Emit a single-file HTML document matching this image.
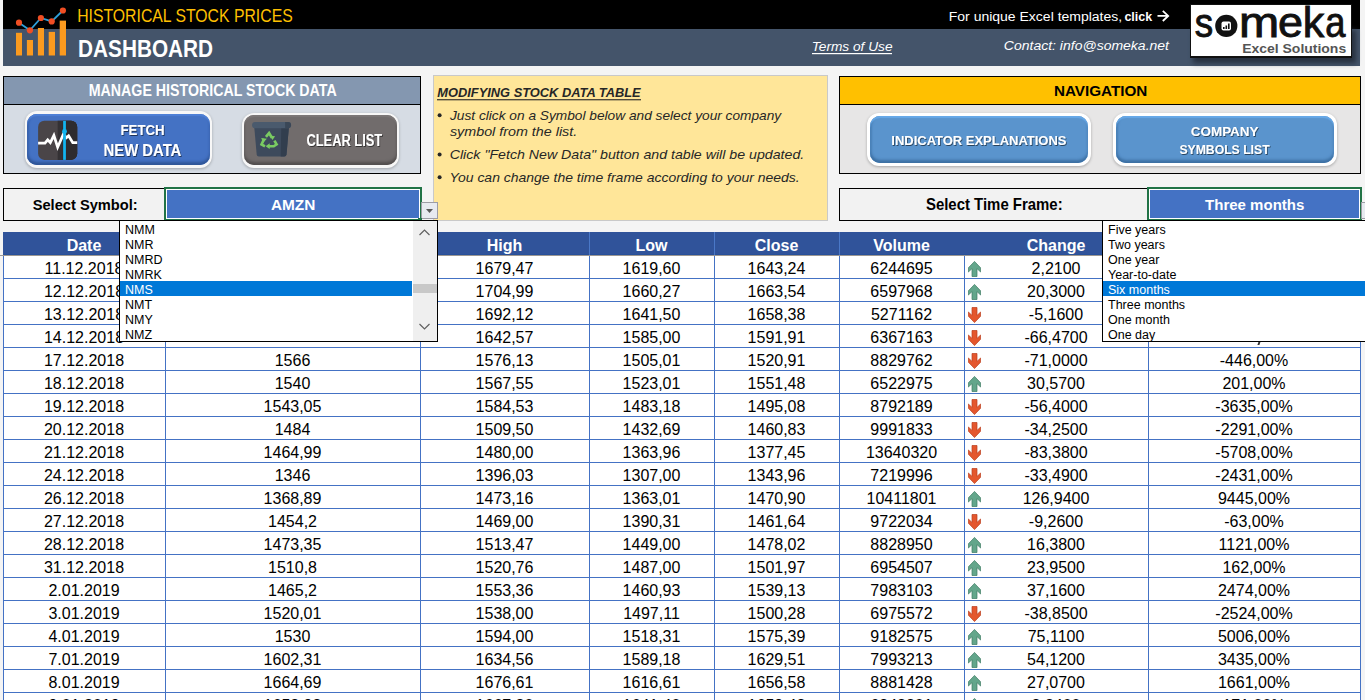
<!DOCTYPE html>
<html><head><meta charset="utf-8"><style>
*{margin:0;padding:0;box-sizing:border-box}
html,body{width:1365px;height:700px;overflow:hidden;background:#f4f4f4;font-family:"Liberation Sans",sans-serif}
#root{position:relative;width:1365px;height:700px;overflow:hidden}
#root div, #root svg{position:absolute}
.thdr{background:#30539a}
.th{color:#fff;font-weight:bold;font-size:16px;text-align:center;white-space:nowrap}
.hsep{width:1px;background:#4a78c8}
.tbody{background:#fff}
.hl{height:1px;background:#4472c4}
.vl{width:1px;background:#4472c4}
.td{height:23px;line-height:28px;font-size:16px;text-align:center;color:#000;white-space:nowrap}
.txt{white-space:nowrap}

</style></head><body>
<div id="root">
<div class="thdr" style="left:3px;top:232px;width:1358px;height:23px"></div>
<div class="th" style="left:3px;top:232px;width:162px;height:23px;line-height:28px">Date</div>
<div class="th" style="left:165px;top:232px;width:255px;height:23px;line-height:28px">Open</div>
<div class="th" style="left:420px;top:232px;width:169px;height:23px;line-height:28px">High</div>
<div class="th" style="left:589px;top:232px;width:125px;height:23px;line-height:28px">Low</div>
<div class="th" style="left:714px;top:232px;width:125px;height:23px;line-height:28px">Close</div>
<div class="th" style="left:839px;top:232px;width:125px;height:23px;line-height:28px">Volume</div>
<div class="th" style="left:964px;top:232px;width:184px;height:23px;line-height:28px">Change</div>
<div class="th" style="left:1148px;top:232px;width:212px;height:23px;line-height:28px">Change %</div>
<div class="hsep" style="left:165px;top:232px;height:23px"></div>
<div class="hsep" style="left:420px;top:232px;height:23px"></div>
<div class="hsep" style="left:589px;top:232px;height:23px"></div>
<div class="hsep" style="left:714px;top:232px;height:23px"></div>
<div class="hsep" style="left:839px;top:232px;height:23px"></div>
<div class="hsep" style="left:1148px;top:232px;height:23px"></div>
<div class="tbody" style="left:3px;top:255px;width:1357px;height:445px"></div>
<div style="left:0px;top:255px;width:1361px;height:1px;background:#9c9792"></div>
<div style="left:3px;top:254px;width:1358px;height:1px;background:#27509a"></div>
<div class="hsep" style="left:165px;top:254px;height:1px"></div>
<div class="hsep" style="left:420px;top:254px;height:1px"></div>
<div class="hsep" style="left:589px;top:254px;height:1px"></div>
<div class="hsep" style="left:714px;top:254px;height:1px"></div>
<div class="hsep" style="left:839px;top:254px;height:1px"></div>
<div class="hsep" style="left:1148px;top:254px;height:1px"></div>
<div class="hl" style="left:3px;top:278px;width:1358px"></div>
<div class="hl" style="left:3px;top:301px;width:1358px"></div>
<div class="hl" style="left:3px;top:324px;width:1358px"></div>
<div class="hl" style="left:3px;top:347px;width:1358px"></div>
<div class="hl" style="left:3px;top:370px;width:1358px"></div>
<div class="hl" style="left:3px;top:393px;width:1358px"></div>
<div class="hl" style="left:3px;top:416px;width:1358px"></div>
<div class="hl" style="left:3px;top:439px;width:1358px"></div>
<div class="hl" style="left:3px;top:462px;width:1358px"></div>
<div class="hl" style="left:3px;top:485px;width:1358px"></div>
<div class="hl" style="left:3px;top:508px;width:1358px"></div>
<div class="hl" style="left:3px;top:531px;width:1358px"></div>
<div class="hl" style="left:3px;top:554px;width:1358px"></div>
<div class="hl" style="left:3px;top:577px;width:1358px"></div>
<div class="hl" style="left:3px;top:600px;width:1358px"></div>
<div class="hl" style="left:3px;top:623px;width:1358px"></div>
<div class="hl" style="left:3px;top:646px;width:1358px"></div>
<div class="hl" style="left:3px;top:669px;width:1358px"></div>
<div class="hl" style="left:3px;top:692px;width:1358px"></div>
<div class="vl" style="left:3px;top:256px;height:445px"></div>
<div class="vl" style="left:165px;top:256px;height:445px"></div>
<div class="vl" style="left:420px;top:256px;height:445px"></div>
<div class="vl" style="left:589px;top:256px;height:445px"></div>
<div class="vl" style="left:714px;top:256px;height:445px"></div>
<div class="vl" style="left:839px;top:256px;height:445px"></div>
<div class="vl" style="left:964px;top:256px;height:445px"></div>
<div class="vl" style="left:1148px;top:256px;height:445px"></div>
<div class="vl" style="left:1360px;top:256px;height:445px"></div>
<div class="td" style="left:3px;top:255px;width:162px">11.12.2018</div>
<div class="td" style="left:165px;top:255px;width:255px"></div>
<div class="td" style="left:420px;top:255px;width:169px">1679,47</div>
<div class="td" style="left:589px;top:255px;width:125px">1619,60</div>
<div class="td" style="left:714px;top:255px;width:125px">1643,24</div>
<div class="td" style="left:839px;top:255px;width:125px">6244695</div>
<div class="td" style="left:964px;top:255px;width:184px">2,2100</div>
<div class="td" style="left:1148px;top:255px;width:212px"></div>
<svg class="arr" style="left:968px;top:261px" width="13" height="16" viewBox="0 0 13 16"><path d="M6.5 0.4 L12.6 6.8 L12.6 11 L9 7.6 L9 15.5 L4 15.5 L4 7.6 L0.4 11 L0.4 6.8 Z" fill="#63a68b" stroke="#3c7a62" stroke-width="0.7" stroke-linejoin="round"/></svg>
<div class="td" style="left:3px;top:278px;width:162px">12.12.2018</div>
<div class="td" style="left:165px;top:278px;width:255px"></div>
<div class="td" style="left:420px;top:278px;width:169px">1704,99</div>
<div class="td" style="left:589px;top:278px;width:125px">1660,27</div>
<div class="td" style="left:714px;top:278px;width:125px">1663,54</div>
<div class="td" style="left:839px;top:278px;width:125px">6597968</div>
<div class="td" style="left:964px;top:278px;width:184px">20,3000</div>
<div class="td" style="left:1148px;top:278px;width:212px"></div>
<svg class="arr" style="left:968px;top:284px" width="13" height="16" viewBox="0 0 13 16"><path d="M6.5 0.4 L12.6 6.8 L12.6 11 L9 7.6 L9 15.5 L4 15.5 L4 7.6 L0.4 11 L0.4 6.8 Z" fill="#63a68b" stroke="#3c7a62" stroke-width="0.7" stroke-linejoin="round"/></svg>
<div class="td" style="left:3px;top:301px;width:162px">13.12.2018</div>
<div class="td" style="left:165px;top:301px;width:255px"></div>
<div class="td" style="left:420px;top:301px;width:169px">1692,12</div>
<div class="td" style="left:589px;top:301px;width:125px">1641,50</div>
<div class="td" style="left:714px;top:301px;width:125px">1658,38</div>
<div class="td" style="left:839px;top:301px;width:125px">5271162</div>
<div class="td" style="left:964px;top:301px;width:184px">-5,1600</div>
<div class="td" style="left:1148px;top:301px;width:212px"></div>
<svg class="arr" style="left:968px;top:307px" width="13" height="16" viewBox="0 0 13 16"><path d="M6.5 15.6 L12.6 9.2 L12.6 5 L9 8.4 L9 0.5 L4 0.5 L4 8.4 L0.4 5 L0.4 9.2 Z" fill="#e4572e" stroke="#b93d1c" stroke-width="0.7" stroke-linejoin="round"/></svg>
<div class="td" style="left:3px;top:324px;width:162px">14.12.2018</div>
<div class="td" style="left:165px;top:324px;width:255px"></div>
<div class="td" style="left:420px;top:324px;width:169px">1642,57</div>
<div class="td" style="left:589px;top:324px;width:125px">1585,00</div>
<div class="td" style="left:714px;top:324px;width:125px">1591,91</div>
<div class="td" style="left:839px;top:324px;width:125px">6367163</div>
<div class="td" style="left:964px;top:324px;width:184px">-66,4700</div>
<div class="td" style="left:1148px;top:324px;width:212px"></div>
<svg class="arr" style="left:968px;top:330px" width="13" height="16" viewBox="0 0 13 16"><path d="M6.5 15.6 L12.6 9.2 L12.6 5 L9 8.4 L9 0.5 L4 0.5 L4 8.4 L0.4 5 L0.4 9.2 Z" fill="#e4572e" stroke="#b93d1c" stroke-width="0.7" stroke-linejoin="round"/></svg>
<div class="td" style="left:3px;top:347px;width:162px">17.12.2018</div>
<div class="td" style="left:165px;top:347px;width:255px">1566</div>
<div class="td" style="left:420px;top:347px;width:169px">1576,13</div>
<div class="td" style="left:589px;top:347px;width:125px">1505,01</div>
<div class="td" style="left:714px;top:347px;width:125px">1520,91</div>
<div class="td" style="left:839px;top:347px;width:125px">8829762</div>
<div class="td" style="left:964px;top:347px;width:184px">-71,0000</div>
<div class="td" style="left:1148px;top:347px;width:212px">-446,00%</div>
<svg class="arr" style="left:968px;top:353px" width="13" height="16" viewBox="0 0 13 16"><path d="M6.5 15.6 L12.6 9.2 L12.6 5 L9 8.4 L9 0.5 L4 0.5 L4 8.4 L0.4 5 L0.4 9.2 Z" fill="#e4572e" stroke="#b93d1c" stroke-width="0.7" stroke-linejoin="round"/></svg>
<div class="td" style="left:3px;top:370px;width:162px">18.12.2018</div>
<div class="td" style="left:165px;top:370px;width:255px">1540</div>
<div class="td" style="left:420px;top:370px;width:169px">1567,55</div>
<div class="td" style="left:589px;top:370px;width:125px">1523,01</div>
<div class="td" style="left:714px;top:370px;width:125px">1551,48</div>
<div class="td" style="left:839px;top:370px;width:125px">6522975</div>
<div class="td" style="left:964px;top:370px;width:184px">30,5700</div>
<div class="td" style="left:1148px;top:370px;width:212px">201,00%</div>
<svg class="arr" style="left:968px;top:376px" width="13" height="16" viewBox="0 0 13 16"><path d="M6.5 0.4 L12.6 6.8 L12.6 11 L9 7.6 L9 15.5 L4 15.5 L4 7.6 L0.4 11 L0.4 6.8 Z" fill="#63a68b" stroke="#3c7a62" stroke-width="0.7" stroke-linejoin="round"/></svg>
<div class="td" style="left:3px;top:393px;width:162px">19.12.2018</div>
<div class="td" style="left:165px;top:393px;width:255px">1543,05</div>
<div class="td" style="left:420px;top:393px;width:169px">1584,53</div>
<div class="td" style="left:589px;top:393px;width:125px">1483,18</div>
<div class="td" style="left:714px;top:393px;width:125px">1495,08</div>
<div class="td" style="left:839px;top:393px;width:125px">8792189</div>
<div class="td" style="left:964px;top:393px;width:184px">-56,4000</div>
<div class="td" style="left:1148px;top:393px;width:212px">-3635,00%</div>
<svg class="arr" style="left:968px;top:399px" width="13" height="16" viewBox="0 0 13 16"><path d="M6.5 15.6 L12.6 9.2 L12.6 5 L9 8.4 L9 0.5 L4 0.5 L4 8.4 L0.4 5 L0.4 9.2 Z" fill="#e4572e" stroke="#b93d1c" stroke-width="0.7" stroke-linejoin="round"/></svg>
<div class="td" style="left:3px;top:416px;width:162px">20.12.2018</div>
<div class="td" style="left:165px;top:416px;width:255px">1484</div>
<div class="td" style="left:420px;top:416px;width:169px">1509,50</div>
<div class="td" style="left:589px;top:416px;width:125px">1432,69</div>
<div class="td" style="left:714px;top:416px;width:125px">1460,83</div>
<div class="td" style="left:839px;top:416px;width:125px">9991833</div>
<div class="td" style="left:964px;top:416px;width:184px">-34,2500</div>
<div class="td" style="left:1148px;top:416px;width:212px">-2291,00%</div>
<svg class="arr" style="left:968px;top:422px" width="13" height="16" viewBox="0 0 13 16"><path d="M6.5 15.6 L12.6 9.2 L12.6 5 L9 8.4 L9 0.5 L4 0.5 L4 8.4 L0.4 5 L0.4 9.2 Z" fill="#e4572e" stroke="#b93d1c" stroke-width="0.7" stroke-linejoin="round"/></svg>
<div class="td" style="left:3px;top:439px;width:162px">21.12.2018</div>
<div class="td" style="left:165px;top:439px;width:255px">1464,99</div>
<div class="td" style="left:420px;top:439px;width:169px">1480,00</div>
<div class="td" style="left:589px;top:439px;width:125px">1363,96</div>
<div class="td" style="left:714px;top:439px;width:125px">1377,45</div>
<div class="td" style="left:839px;top:439px;width:125px">13640320</div>
<div class="td" style="left:964px;top:439px;width:184px">-83,3800</div>
<div class="td" style="left:1148px;top:439px;width:212px">-5708,00%</div>
<svg class="arr" style="left:968px;top:445px" width="13" height="16" viewBox="0 0 13 16"><path d="M6.5 15.6 L12.6 9.2 L12.6 5 L9 8.4 L9 0.5 L4 0.5 L4 8.4 L0.4 5 L0.4 9.2 Z" fill="#e4572e" stroke="#b93d1c" stroke-width="0.7" stroke-linejoin="round"/></svg>
<div class="td" style="left:3px;top:462px;width:162px">24.12.2018</div>
<div class="td" style="left:165px;top:462px;width:255px">1346</div>
<div class="td" style="left:420px;top:462px;width:169px">1396,03</div>
<div class="td" style="left:589px;top:462px;width:125px">1307,00</div>
<div class="td" style="left:714px;top:462px;width:125px">1343,96</div>
<div class="td" style="left:839px;top:462px;width:125px">7219996</div>
<div class="td" style="left:964px;top:462px;width:184px">-33,4900</div>
<div class="td" style="left:1148px;top:462px;width:212px">-2431,00%</div>
<svg class="arr" style="left:968px;top:468px" width="13" height="16" viewBox="0 0 13 16"><path d="M6.5 15.6 L12.6 9.2 L12.6 5 L9 8.4 L9 0.5 L4 0.5 L4 8.4 L0.4 5 L0.4 9.2 Z" fill="#e4572e" stroke="#b93d1c" stroke-width="0.7" stroke-linejoin="round"/></svg>
<div class="td" style="left:3px;top:485px;width:162px">26.12.2018</div>
<div class="td" style="left:165px;top:485px;width:255px">1368,89</div>
<div class="td" style="left:420px;top:485px;width:169px">1473,16</div>
<div class="td" style="left:589px;top:485px;width:125px">1363,01</div>
<div class="td" style="left:714px;top:485px;width:125px">1470,90</div>
<div class="td" style="left:839px;top:485px;width:125px">10411801</div>
<div class="td" style="left:964px;top:485px;width:184px">126,9400</div>
<div class="td" style="left:1148px;top:485px;width:212px">9445,00%</div>
<svg class="arr" style="left:968px;top:491px" width="13" height="16" viewBox="0 0 13 16"><path d="M6.5 0.4 L12.6 6.8 L12.6 11 L9 7.6 L9 15.5 L4 15.5 L4 7.6 L0.4 11 L0.4 6.8 Z" fill="#63a68b" stroke="#3c7a62" stroke-width="0.7" stroke-linejoin="round"/></svg>
<div class="td" style="left:3px;top:508px;width:162px">27.12.2018</div>
<div class="td" style="left:165px;top:508px;width:255px">1454,2</div>
<div class="td" style="left:420px;top:508px;width:169px">1469,00</div>
<div class="td" style="left:589px;top:508px;width:125px">1390,31</div>
<div class="td" style="left:714px;top:508px;width:125px">1461,64</div>
<div class="td" style="left:839px;top:508px;width:125px">9722034</div>
<div class="td" style="left:964px;top:508px;width:184px">-9,2600</div>
<div class="td" style="left:1148px;top:508px;width:212px">-63,00%</div>
<svg class="arr" style="left:968px;top:514px" width="13" height="16" viewBox="0 0 13 16"><path d="M6.5 15.6 L12.6 9.2 L12.6 5 L9 8.4 L9 0.5 L4 0.5 L4 8.4 L0.4 5 L0.4 9.2 Z" fill="#e4572e" stroke="#b93d1c" stroke-width="0.7" stroke-linejoin="round"/></svg>
<div class="td" style="left:3px;top:531px;width:162px">28.12.2018</div>
<div class="td" style="left:165px;top:531px;width:255px">1473,35</div>
<div class="td" style="left:420px;top:531px;width:169px">1513,47</div>
<div class="td" style="left:589px;top:531px;width:125px">1449,00</div>
<div class="td" style="left:714px;top:531px;width:125px">1478,02</div>
<div class="td" style="left:839px;top:531px;width:125px">8828950</div>
<div class="td" style="left:964px;top:531px;width:184px">16,3800</div>
<div class="td" style="left:1148px;top:531px;width:212px">1121,00%</div>
<svg class="arr" style="left:968px;top:537px" width="13" height="16" viewBox="0 0 13 16"><path d="M6.5 0.4 L12.6 6.8 L12.6 11 L9 7.6 L9 15.5 L4 15.5 L4 7.6 L0.4 11 L0.4 6.8 Z" fill="#63a68b" stroke="#3c7a62" stroke-width="0.7" stroke-linejoin="round"/></svg>
<div class="td" style="left:3px;top:554px;width:162px">31.12.2018</div>
<div class="td" style="left:165px;top:554px;width:255px">1510,8</div>
<div class="td" style="left:420px;top:554px;width:169px">1520,76</div>
<div class="td" style="left:589px;top:554px;width:125px">1487,00</div>
<div class="td" style="left:714px;top:554px;width:125px">1501,97</div>
<div class="td" style="left:839px;top:554px;width:125px">6954507</div>
<div class="td" style="left:964px;top:554px;width:184px">23,9500</div>
<div class="td" style="left:1148px;top:554px;width:212px">162,00%</div>
<svg class="arr" style="left:968px;top:560px" width="13" height="16" viewBox="0 0 13 16"><path d="M6.5 0.4 L12.6 6.8 L12.6 11 L9 7.6 L9 15.5 L4 15.5 L4 7.6 L0.4 11 L0.4 6.8 Z" fill="#63a68b" stroke="#3c7a62" stroke-width="0.7" stroke-linejoin="round"/></svg>
<div class="td" style="left:3px;top:577px;width:162px">2.01.2019</div>
<div class="td" style="left:165px;top:577px;width:255px">1465,2</div>
<div class="td" style="left:420px;top:577px;width:169px">1553,36</div>
<div class="td" style="left:589px;top:577px;width:125px">1460,93</div>
<div class="td" style="left:714px;top:577px;width:125px">1539,13</div>
<div class="td" style="left:839px;top:577px;width:125px">7983103</div>
<div class="td" style="left:964px;top:577px;width:184px">37,1600</div>
<div class="td" style="left:1148px;top:577px;width:212px">2474,00%</div>
<svg class="arr" style="left:968px;top:583px" width="13" height="16" viewBox="0 0 13 16"><path d="M6.5 0.4 L12.6 6.8 L12.6 11 L9 7.6 L9 15.5 L4 15.5 L4 7.6 L0.4 11 L0.4 6.8 Z" fill="#63a68b" stroke="#3c7a62" stroke-width="0.7" stroke-linejoin="round"/></svg>
<div class="td" style="left:3px;top:600px;width:162px">3.01.2019</div>
<div class="td" style="left:165px;top:600px;width:255px">1520,01</div>
<div class="td" style="left:420px;top:600px;width:169px">1538,00</div>
<div class="td" style="left:589px;top:600px;width:125px">1497,11</div>
<div class="td" style="left:714px;top:600px;width:125px">1500,28</div>
<div class="td" style="left:839px;top:600px;width:125px">6975572</div>
<div class="td" style="left:964px;top:600px;width:184px">-38,8500</div>
<div class="td" style="left:1148px;top:600px;width:212px">-2524,00%</div>
<svg class="arr" style="left:968px;top:606px" width="13" height="16" viewBox="0 0 13 16"><path d="M6.5 15.6 L12.6 9.2 L12.6 5 L9 8.4 L9 0.5 L4 0.5 L4 8.4 L0.4 5 L0.4 9.2 Z" fill="#e4572e" stroke="#b93d1c" stroke-width="0.7" stroke-linejoin="round"/></svg>
<div class="td" style="left:3px;top:623px;width:162px">4.01.2019</div>
<div class="td" style="left:165px;top:623px;width:255px">1530</div>
<div class="td" style="left:420px;top:623px;width:169px">1594,00</div>
<div class="td" style="left:589px;top:623px;width:125px">1518,31</div>
<div class="td" style="left:714px;top:623px;width:125px">1575,39</div>
<div class="td" style="left:839px;top:623px;width:125px">9182575</div>
<div class="td" style="left:964px;top:623px;width:184px">75,1100</div>
<div class="td" style="left:1148px;top:623px;width:212px">5006,00%</div>
<svg class="arr" style="left:968px;top:629px" width="13" height="16" viewBox="0 0 13 16"><path d="M6.5 0.4 L12.6 6.8 L12.6 11 L9 7.6 L9 15.5 L4 15.5 L4 7.6 L0.4 11 L0.4 6.8 Z" fill="#63a68b" stroke="#3c7a62" stroke-width="0.7" stroke-linejoin="round"/></svg>
<div class="td" style="left:3px;top:646px;width:162px">7.01.2019</div>
<div class="td" style="left:165px;top:646px;width:255px">1602,31</div>
<div class="td" style="left:420px;top:646px;width:169px">1634,56</div>
<div class="td" style="left:589px;top:646px;width:125px">1589,18</div>
<div class="td" style="left:714px;top:646px;width:125px">1629,51</div>
<div class="td" style="left:839px;top:646px;width:125px">7993213</div>
<div class="td" style="left:964px;top:646px;width:184px">54,1200</div>
<div class="td" style="left:1148px;top:646px;width:212px">3435,00%</div>
<svg class="arr" style="left:968px;top:652px" width="13" height="16" viewBox="0 0 13 16"><path d="M6.5 0.4 L12.6 6.8 L12.6 11 L9 7.6 L9 15.5 L4 15.5 L4 7.6 L0.4 11 L0.4 6.8 Z" fill="#63a68b" stroke="#3c7a62" stroke-width="0.7" stroke-linejoin="round"/></svg>
<div class="td" style="left:3px;top:669px;width:162px">8.01.2019</div>
<div class="td" style="left:165px;top:669px;width:255px">1664,69</div>
<div class="td" style="left:420px;top:669px;width:169px">1676,61</div>
<div class="td" style="left:589px;top:669px;width:125px">1616,61</div>
<div class="td" style="left:714px;top:669px;width:125px">1656,58</div>
<div class="td" style="left:839px;top:669px;width:125px">8881428</div>
<div class="td" style="left:964px;top:669px;width:184px">27,0700</div>
<div class="td" style="left:1148px;top:669px;width:212px">1661,00%</div>
<svg class="arr" style="left:968px;top:675px" width="13" height="16" viewBox="0 0 13 16"><path d="M6.5 0.4 L12.6 6.8 L12.6 11 L9 7.6 L9 15.5 L4 15.5 L4 7.6 L0.4 11 L0.4 6.8 Z" fill="#63a68b" stroke="#3c7a62" stroke-width="0.7" stroke-linejoin="round"/></svg>
<div class="td" style="left:3px;top:692px;width:162px">9.01.2019</div>
<div class="td" style="left:165px;top:692px;width:255px">1652,98</div>
<div class="td" style="left:420px;top:692px;width:169px">1667,80</div>
<div class="td" style="left:589px;top:692px;width:125px">1641,40</div>
<div class="td" style="left:714px;top:692px;width:125px">1659,42</div>
<div class="td" style="left:839px;top:692px;width:125px">6348801</div>
<div class="td" style="left:964px;top:692px;width:184px">2,8400</div>
<div class="td" style="left:1148px;top:692px;width:212px">171,00%</div>
<svg class="arr" style="left:968px;top:698px" width="13" height="16" viewBox="0 0 13 16"><path d="M6.5 0.4 L12.6 6.8 L12.6 11 L9 7.6 L9 15.5 L4 15.5 L4 7.6 L0.4 11 L0.4 6.8 Z" fill="#63a68b" stroke="#3c7a62" stroke-width="0.7" stroke-linejoin="round"/></svg>
<div style="left:1258px;top:342px;width:1.5px;height:2.5px;background:#333;transform:skewX(-20deg)"></div>
<!-- header bands -->
<div style="left:3px;top:0;width:1357px;height:29px;background:#000"></div>
<div style="left:3px;top:29px;width:1357px;height:37px;background:#44546a"></div>
<!-- logo icon -->
<svg style="left:10px;top:3px" width="60" height="60" viewBox="0 0 60 60">
 <g fill="#fb9a1f">
  <rect x="6" y="29.8" width="6" height="22.7"/>
  <rect x="16.9" y="37" width="6.1" height="15.5"/>
  <rect x="27.9" y="25" width="6.1" height="27.5"/>
  <rect x="38.7" y="28.9" width="6.3" height="23.6"/>
  <rect x="49.7" y="17.6" width="6.3" height="34.9"/>
 </g>
 <polyline points="9,19.7 19.9,27.3 30.9,15 41.7,18.4 52.9,7.5" fill="none" stroke="#2e9fd8" stroke-width="1.8"/>
 <g fill="#f04e23">
  <circle cx="9" cy="19.7" r="3.1"/><circle cx="19.9" cy="27.3" r="3.1"/><circle cx="30.9" cy="15" r="3.1"/><circle cx="41.7" cy="18.4" r="3.1"/><circle cx="52.9" cy="7.5" r="3.1"/>
 </g>
</svg>
<!-- someka logo -->
<div style="left:1194px;top:29px;width:166px;height:37px;background:linear-gradient(#44546a,#44546a);"></div><div style="left:1193px;top:30px;width:163px;height:33px;background:#27313f;filter:blur(2.5px)"></div>
<div style="left:1190px;top:4px;width:162px;height:54px;background:#fff;border:1px solid #111;border-width:1px 1px 2px 1px"></div>
<svg style="left:1190px;top:4px" width="162" height="54" viewBox="1190 4 162 54">
 <circle cx="1226.3" cy="25.9" r="11.1" fill="#111"/>
 <rect x="1221.5" y="21.5" width="9.5" height="9" rx="2" fill="#fff"/>
 <rect x="1223" y="27" width="1.6" height="2" fill="#111"/><rect x="1225.5" y="25.5" width="1.6" height="3.5" fill="#111"/><rect x="1228" y="23.5" width="1.6" height="5.5" fill="#111"/>
</svg>
<!-- manage panel -->
<div style="left:3px;top:76px;width:418px;height:98px;background:#d6dce4;border:1px solid #000"></div>
<div style="left:3px;top:76px;width:418px;height:29px;background:#8497b0;border:1px solid #000"></div>
<!-- fetch button -->
<div style="left:25px;top:111px;width:187px;height:57px;border-radius:12px;background:#f7f7f7;box-shadow:0 1px 3px rgba(0,0,0,0.25)"></div>
<div style="left:27px;top:114px;width:183px;height:51px;border-radius:10px;background:#4472c4;box-shadow:inset 0 2px 1px #4f80d6, inset 0 -3px 3px #2f5597, inset 2px 0 2px #3b66b3"></div>
<svg style="left:34px;top:116px" width="48" height="48" viewBox="0 0 700 700">
 <defs><clipPath id="rc"><rect x="60" y="70" width="570" height="570" rx="90"/></clipPath></defs>
 <g clip-path="url(#rc)"><rect width="700" height="700" fill="#4a4548"/><rect x="345" width="400" height="700" fill="#343134"/><rect x="420" width="300" height="700" fill="#2e2b2e"/></g>
 <polyline points="60,395 160,395 200,348 238,388 290,282 345,455 430,262 470,318 505,290 565,388 630,388" fill="none" stroke="#fff" stroke-width="40" stroke-linejoin="miter"/>
 <rect x="425" y="70" width="40" height="570" fill="#12b5f0"/>
 <circle cx="445" cy="225" r="36" fill="#12b5f0"/>
</svg>
<!-- clear button -->
<div style="left:242px;top:113px;width:157px;height:55px;border-radius:12px;background:#f7f7f7;box-shadow:0 1px 3px rgba(0,0,0,0.25)"></div>
<div style="left:244px;top:115px;width:153px;height:50px;border-radius:10px;background:#716c6c;box-shadow:inset 0 2px 1px #7c7777, inset 0 -3px 3px #524e4e"></div>
<svg style="left:248px;top:118px" width="50" height="44" viewBox="0 0 795 700">
 <path d="M100 150 L650 150 L612 580 Q609 612 577 612 L173 612 Q141 612 138 580 Z" fill="#3d4a5c"/>
 <path d="M530 150 L650 150 L612 580 Q609 612 577 612 L520 612 Z" fill="#323e4e"/>
 <rect x="65" y="65" width="620" height="97" rx="46" fill="#4a5a6d"/>
 <path d="M590 65 L639 65 Q685 65 685 113 Q685 162 639 162 L590 162 Z" fill="#3a4757"/>
 <g fill="none" stroke="#7acb62" stroke-width="42" stroke-linejoin="miter">
  <path d="M285 300 L335 240 L380 315"/>
  <path d="M420 360 L455 420 L410 450 L330 450"/>
  <path d="M270 450 L215 420 L255 335"/>
 </g>
 <g fill="#7acb62">
  <path d="M340 280 L430 290 L390 350 Z"/>
  <path d="M345 400 L345 495 L280 450 Z"/>
  <path d="M210 320 L300 330 L240 395 Z"/>
 </g>
</svg>

<!-- yellow note -->
<div style="left:433px;top:75px;width:395px;height:146px;background:#ffe699;border:1px solid #c9c9c9"></div>

<!-- navigation -->
<div style="left:839px;top:76px;width:522px;height:98px;background:#e7e6e6;border:1px solid #000"></div>
<div style="left:839px;top:76px;width:522px;height:29px;background:#ffc000;border:1px solid #000"></div>
<div style="left:867px;top:113px;width:224px;height:53px;border-radius:12px;background:#fff;box-shadow:0 1px 3px rgba(0,0,0,0.28)"></div>
<div style="left:870px;top:116px;width:218px;height:47px;border-radius:10px;background:#5a94cd;box-shadow:inset 0 2px 1px #67a9e8, inset 0 -3px 3px #3d70a3, inset 2px 0 2px #4f86bd"></div>
<div style="left:1113px;top:113px;width:224px;height:53px;border-radius:12px;background:#fff;box-shadow:0 1px 3px rgba(0,0,0,0.28)"></div>
<div style="left:1116px;top:116px;width:218px;height:47px;border-radius:10px;background:#5a94cd;box-shadow:inset 0 2px 1px #67a9e8, inset 0 -3px 3px #3d70a3, inset 2px 0 2px #4f86bd"></div>

<!-- select symbol row -->
<div style="left:3px;top:188px;width:419px;height:33px;background:#f2f2f2;border:1px solid #000"></div>
<div style="left:164px;top:187px;width:258px;height:34px;border:2px solid #217346"></div>
<div style="left:166px;top:189px;width:254px;height:30px;background:#4472c4;border:1px solid #fff"></div>
<div style="left:421px;top:202px;width:17px;height:17px;background:#e7eaf0;border:1px solid #9c9ca4"></div>
<svg style="left:426px;top:209px" width="7" height="4" viewBox="0 0 7 4"><path d="M0 0 L7 0 L3.5 4 Z" fill="#5a5a5a"/></svg>
<div style="left:418px;top:218px;width:4px;height:3px;background:#217346"></div>

<!-- select time frame row -->
<div style="left:839px;top:188px;width:522px;height:33px;background:#f2f2f2;border:1px solid #000"></div>
<div style="left:1147px;top:187px;width:215px;height:34px;border:2px solid #217346"></div>
<div style="left:1149px;top:189px;width:211px;height:30px;background:#4472c4;border:1px solid #fff"></div>
<div style="left:1361px;top:202px;width:17px;height:17px;background:#e7eaf0;border:1px solid #9c9ca4"></div>

<!-- freeze line -->
<div style="left:0;top:255px;width:3px;height:1px;background:#9a9a9a"></div>


<svg style="left:0;top:0" width="1365" height="700" viewBox="0 0 1365 700">
<defs><filter id="sh" x="-10%" y="-30%" width="120%" height="160%"><feDropShadow dx="0.8" dy="1" stdDeviation="0.7" flood-color="#000" flood-opacity="0.55"/></filter></defs>
<text x="77.14" y="22.00" font-size="19.19" textLength="215.60" lengthAdjust="spacingAndGlyphs" font-weight="normal" font-style="normal" fill="#ffc000" >HISTORICAL STOCK PRICES</text>
<text x="78.05" y="56.90" font-size="23.40" textLength="134.98" lengthAdjust="spacingAndGlyphs" font-weight="bold" font-style="normal" fill="#fff" >DASHBOARD</text>
<text x="948.78" y="21.00" font-size="13.23" textLength="173.41" lengthAdjust="spacingAndGlyphs" font-weight="normal" font-style="normal" fill="#fff" >For unique Excel templates,</text>
<text x="1124.40" y="21.00" font-size="13.23" textLength="27.79" lengthAdjust="spacingAndGlyphs" font-weight="bold" font-style="normal" fill="#fff" >click</text>
<path d="M1157.5 15.9 L1168 15.9 M1162.8 10.8 L1168.2 15.9 L1162.8 21" fill="none" stroke="#fff" stroke-width="1.8"/>
<text x="811.67" y="50.90" font-size="13.08" textLength="80.90" lengthAdjust="spacingAndGlyphs" font-weight="normal" font-style="italic" fill="#fff" >Terms of Use</text>
<rect x="812" y="53" width="80" height="1.2" fill="#fff"/>
<text x="1003.83" y="50.00" font-size="13.23" textLength="165.17" lengthAdjust="spacingAndGlyphs" font-weight="normal" font-style="italic" fill="#fff" >Contact: info@someka.net</text>
<text x="88.78" y="95.90" font-size="15.84" textLength="247.93" lengthAdjust="spacingAndGlyphs" font-weight="bold" font-style="normal" fill="#fff" >MANAGE HISTORICAL STOCK DATA</text>
<text x="1053.91" y="95.70" font-size="15.41" textLength="93.45" lengthAdjust="spacingAndGlyphs" font-weight="bold" font-style="normal" fill="#000" >NAVIGATION</text>
<text x="32.66" y="209.50" font-size="15.55" textLength="105.09" lengthAdjust="spacingAndGlyphs" font-weight="bold" font-style="normal" fill="#000" >Select Symbol:</text>
<text x="270.92" y="209.70" font-size="15.55" textLength="44.44" lengthAdjust="spacingAndGlyphs" font-weight="bold" font-style="normal" fill="#fff" >AMZN</text>
<text x="925.95" y="209.80" font-size="15.99" textLength="136.70" lengthAdjust="spacingAndGlyphs" font-weight="bold" font-style="normal" fill="#000" >Select Time Frame:</text>
<text x="1205.05" y="209.50" font-size="15.55" textLength="99.28" lengthAdjust="spacingAndGlyphs" font-weight="bold" font-style="normal" fill="#fff" >Three months</text>
<text x="120.54" y="134.80" font-size="15.26" textLength="44.16" lengthAdjust="spacingAndGlyphs" font-weight="bold" font-style="normal" fill="#fff" filter="url(#sh)">FETCH</text>
<text x="103.53" y="155.90" font-size="15.84" textLength="77.83" lengthAdjust="spacingAndGlyphs" font-weight="bold" font-style="normal" fill="#fff" filter="url(#sh)">NEW DATA</text>
<text x="306.38" y="146.00" font-size="16.13" textLength="75.83" lengthAdjust="spacingAndGlyphs" font-weight="bold" font-style="normal" fill="#fff" filter="url(#sh)">CLEAR LIST</text>
<text x="891.36" y="144.80" font-size="12.94" textLength="175.11" lengthAdjust="spacingAndGlyphs" font-weight="bold" font-style="normal" fill="#fff" filter="url(#sh)">INDICATOR EXPLANATIONS</text>
<text x="1190.86" y="135.90" font-size="13.23" textLength="67.57" lengthAdjust="spacingAndGlyphs" font-weight="bold" font-style="normal" fill="#fff" filter="url(#sh)">COMPANY</text>
<text x="1179.43" y="153.70" font-size="13.23" textLength="90.18" lengthAdjust="spacingAndGlyphs" font-weight="bold" font-style="normal" fill="#fff" filter="url(#sh)">SYMBOLS LIST</text>
<text x="437.34" y="96.90" font-size="12.79" textLength="203.27" lengthAdjust="spacingAndGlyphs" font-weight="bold" font-style="italic" fill="#262626" >MODIFYING STOCK DATA TABLE</text>
<rect x="437" y="99.2" width="204" height="1.1" fill="#262626"/>
<text x="450.00" y="119.50" font-size="13.40" textLength="331.20" lengthAdjust="spacingAndGlyphs" font-weight="normal" font-style="italic" fill="#262626" >Just click on a Symbol below and select your company</text>
<text x="449.93" y="135.60" font-size="13.40" textLength="127.31" lengthAdjust="spacingAndGlyphs" font-weight="normal" font-style="italic" fill="#262626" >symbol from the list.</text>
<text x="449.72" y="159.10" font-size="13.40" textLength="354.51" lengthAdjust="spacingAndGlyphs" font-weight="normal" font-style="italic" fill="#262626" >Click &quot;Fetch New Data&quot; button and table will be updated.</text>
<text x="449.43" y="181.70" font-size="13.40" textLength="350.26" lengthAdjust="spacingAndGlyphs" font-weight="normal" font-style="italic" fill="#262626" >You can change the time frame according to your needs.</text>
<circle cx="439.6" cy="115.3" r="2" fill="#262626"/>
<circle cx="439.6" cy="154.5" r="2" fill="#262626"/>
<circle cx="439.6" cy="177.3" r="2" fill="#262626"/>
<text x="1194.70" y="36.60" font-size="39.77" textLength="18.39" lengthAdjust="spacingAndGlyphs" font-weight="normal" font-style="normal" fill="#111" stroke="#111" stroke-width="0.9">s</text>
<text x="1239.07" y="37.00" font-size="41.67" textLength="40.18" lengthAdjust="spacingAndGlyphs" font-weight="normal" font-style="normal" fill="#111" stroke="#111" stroke-width="0.9">m</text>
<text x="1277.90" y="37.00" font-size="41.67" textLength="24.97" lengthAdjust="spacingAndGlyphs" font-weight="normal" font-style="normal" fill="#111" stroke="#111" stroke-width="0.9">e</text>
<text x="1302.71" y="37.00" font-size="41.67" textLength="21.49" lengthAdjust="spacingAndGlyphs" font-weight="normal" font-style="normal" fill="#111" stroke="#111" stroke-width="0.9">k</text>
<text x="1325.15" y="37.00" font-size="41.67" textLength="20.19" lengthAdjust="spacingAndGlyphs" font-weight="normal" font-style="normal" fill="#111" stroke="#111" stroke-width="0.9">a</text>
<text x="1242.19" y="52.70" font-size="12.50" textLength="103.99" lengthAdjust="spacingAndGlyphs" font-weight="bold" font-style="normal" fill="#555" >Excel Solutions</text>
</svg>
<!-- symbol dropdown list -->
<div style="left:119px;top:220px;width:319px;height:122px;background:#fff;border:1px solid #000"></div>
<div style="left:413px;top:221px;width:24px;height:120px;background:#efefef"></div>
<div style="left:413px;top:284px;width:24px;height:9px;background:#c8c8c8"></div>
<svg style="left:418px;top:228px" width="13" height="8" viewBox="0 0 13 8"><path d="M1.5 7 L6.5 2 L11.5 7" fill="none" stroke="#606060" stroke-width="1.2"/></svg>
<svg style="left:418px;top:323px" width="13" height="8" viewBox="0 0 13 8"><path d="M1.5 1 L6.5 6 L11.5 1" fill="none" stroke="#606060" stroke-width="1.2"/></svg>
<div style="left:120px;top:281px;width:292px;height:15px;background:#0078d7"></div>
<div class="txt" style="left:125px;top:223px;font-size:12.5px;line-height:15px;color:#000">NMM<br>NMR<br>NMRD<br>NMRK<br><span style="color:#fff">NMS</span><br>NMT<br>NMY<br>NMZ</div>

<!-- time frame dropdown list -->
<div style="left:1102px;top:220px;width:270px;height:122px;background:#fff;border:1px solid #000"></div>
<div style="left:1103px;top:281px;width:262px;height:15px;background:#0078d7"></div>
<div class="txt" style="left:1108px;top:223px;font-size:12.5px;line-height:15px;color:#000">Five years<br>Two years<br>One year<br>Year-to-date<br><span style="color:#fff">Six months</span><br>Three months<br>One month<br>One day</div>

</div>
</body></html>
